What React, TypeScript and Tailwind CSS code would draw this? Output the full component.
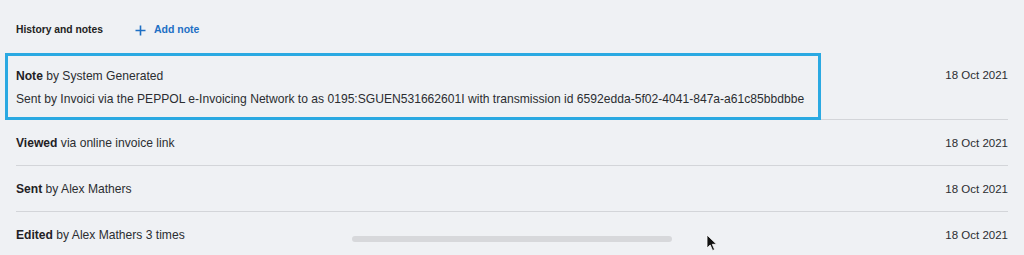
import React from 'react';

type Entry = {
  action: string;
  detail: string;
  date: string;
};

const entries: Entry[] = [
  { action: 'Viewed', detail: 'via online invoice link', date: '18 Oct 2021' },
  { action: 'Sent', detail: 'by Alex Mathers', date: '18 Oct 2021' },
  { action: 'Edited', detail: 'by Alex Mathers 3 times', date: '18 Oct 2021' },
];

export default function App() {
  return (
    <div
      className="relative h-[255px] w-[1024px] overflow-hidden bg-[#eff1f4] text-[#2b2d31]"
      style={{ fontFamily: '"Liberation Sans", Arial, sans-serif' }}
    >
      <div className="px-4">
        {/* Header */}
        <div className="flex h-[53px] items-center pt-[7px]">
          <h2 className="text-[10.3px] font-bold text-[#222]">History and notes</h2>
          <button className="ml-[32px] flex items-center gap-[8px] text-[10.5px] font-bold text-[#1d6fc4]">
            <svg width="11" height="11" viewBox="0 0 11 11" fill="none">
              <path d="M5.5 0.5v10M0.5 5.5h10" stroke="#1d6fc4" strokeWidth="1.6" />
            </svg>
            Add note
          </button>
        </div>

        {/* Highlighted note */}
        <div className="flex items-start justify-between border-b border-[#d3d5d9]">
          <div className="-ml-[11px] -mb-px w-[816px] border-[3px] border-[#2aa9e2] px-[8px] pt-[12px] pb-[10px] text-[12.1px] leading-4">
            <div>
              <span className="font-bold text-[#1f2125]">Note</span> by System Generated
            </div>
            <div className="mt-[7px]">
              Sent by Invoici via the PEPPOL e-Invoicing Network to as 0195:SGUEN531662601I with transmission id
              6592edda-5f02-4041-847a-a61c85bbdbbe
            </div>
          </div>
          <div className="pt-[14px] text-[11.5px] leading-4">18 Oct 2021</div>
        </div>

        {/* Other events */}
        {entries.map((e) => (
          <div
            key={e.action}
            className="flex h-[46px] items-center justify-between border-b border-[#d3d5d9] leading-4"
          >
            <div className="text-[12.1px]">
              <span className="font-bold text-[#1f2125]">{e.action}</span> {e.detail}
            </div>
            <div className="text-[11.5px]">{e.date}</div>
          </div>
        ))}
      </div>

      {/* horizontal scrollbar */}
      <div className="absolute left-[352px] top-[236px] h-[6px] w-[320px] rounded-full bg-[#d7d8db]" />

      {/* mouse cursor */}
      <svg className="absolute left-[706px] top-[234px]" width="12" height="18" viewBox="0 0 12 18">
        <path d="M1 1 L1 14 L4.2 11 L6.6 16.5 L8.6 15.6 L6.3 10.3 L10.6 10.3 Z" fill="#111" stroke="#fff" strokeWidth="0.8" />
      </svg>
    </div>
  );
}
